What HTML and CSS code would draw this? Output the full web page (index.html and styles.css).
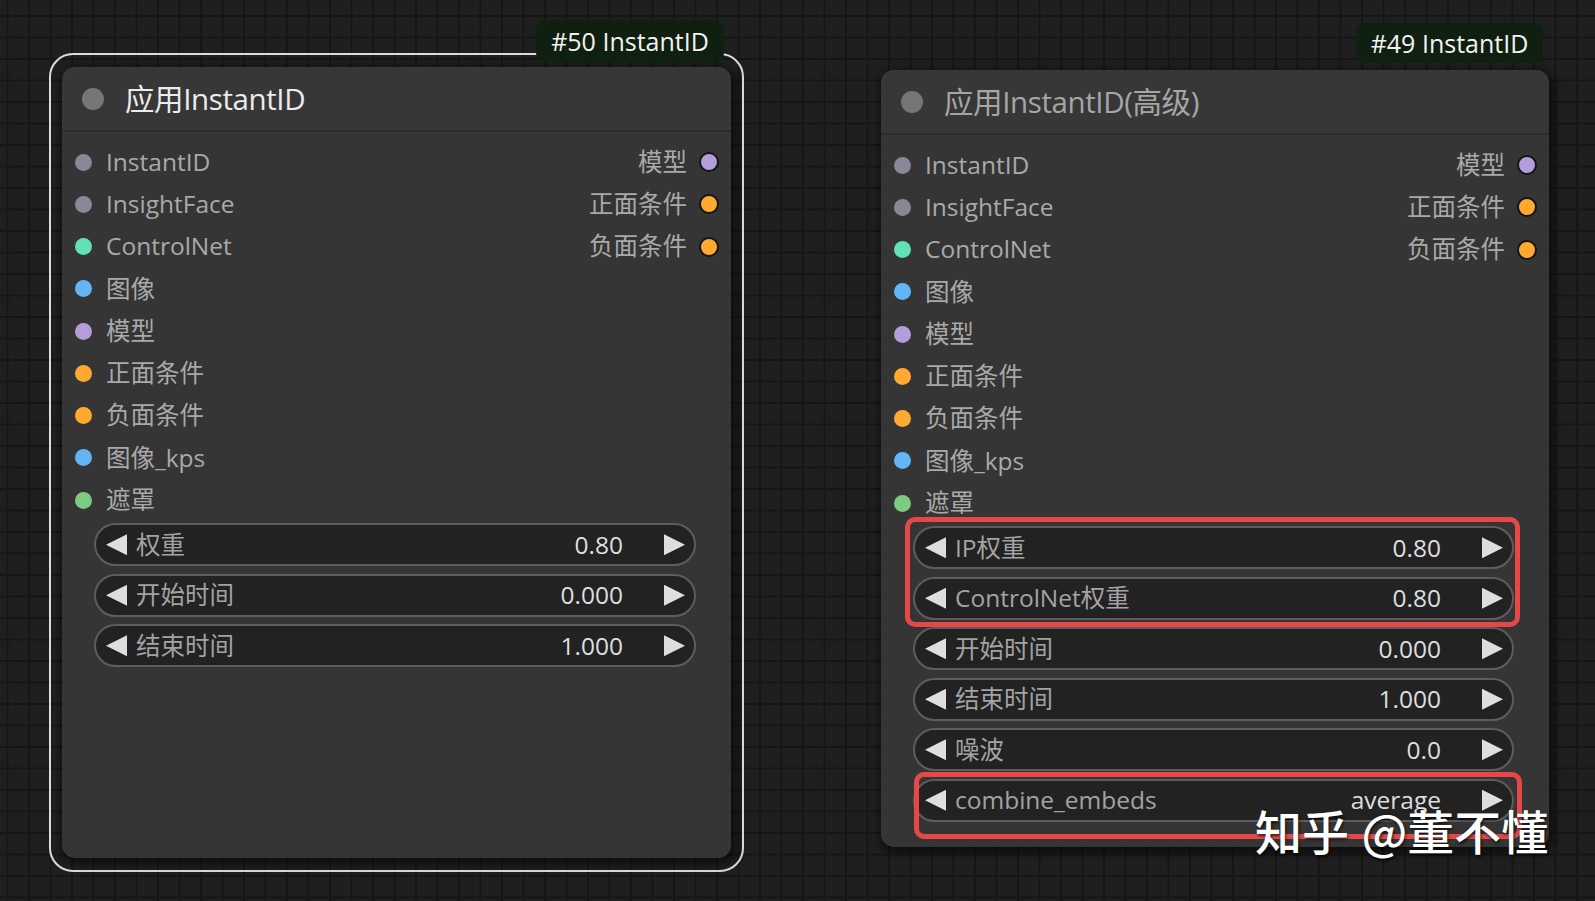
FILE: index.html
```html
<!DOCTYPE html>
<html lang="zh-CN">
<head>
<meta charset="utf-8">
<title>InstantID nodes</title>
<link rel="stylesheet" href="styles.css">
</head>
<body>
<div class="canvas">

  <div class="selection-outline"></div>
  <div class="badge badge-50">#50 InstantID</div>

  <section class="node node-basic">
    <header class="node-title">
      <span class="title-dot"></span>
      <span class="title-text">应用InstantID</span>
    </header>
    <div class="slots">
      <div class="row"><div class="slot-in"><span class="dot c-gray"></span><span>InstantID</span></div><div class="slot-out"><span>模型</span><span class="dot out c-purple"></span></div></div>
      <div class="row"><div class="slot-in"><span class="dot c-gray"></span><span>InsightFace</span></div><div class="slot-out"><span>正面条件</span><span class="dot out c-orange"></span></div></div>
      <div class="row"><div class="slot-in"><span class="dot c-mint"></span><span>ControlNet</span></div><div class="slot-out"><span>负面条件</span><span class="dot out c-orange"></span></div></div>
      <div class="row"><div class="slot-in"><span class="dot c-blue"></span><span>图像</span></div></div>
      <div class="row"><div class="slot-in"><span class="dot c-purple"></span><span>模型</span></div></div>
      <div class="row"><div class="slot-in"><span class="dot c-orange"></span><span>正面条件</span></div></div>
      <div class="row"><div class="slot-in"><span class="dot c-orange"></span><span>负面条件</span></div></div>
      <div class="row"><div class="slot-in"><span class="dot c-blue"></span><span>图像_kps</span></div></div>
      <div class="row"><div class="slot-in"><span class="dot c-green"></span><span>遮罩</span></div></div>
    </div>
    <div class="widgets">
      <div class="widget"><span class="arrow arrow-left"></span><span class="w-label">权重</span><span class="w-value">0.80</span><span class="arrow arrow-right"></span></div>
      <div class="widget"><span class="arrow arrow-left"></span><span class="w-label">开始时间</span><span class="w-value">0.000</span><span class="arrow arrow-right"></span></div>
      <div class="widget"><span class="arrow arrow-left"></span><span class="w-label">结束时间</span><span class="w-value">1.000</span><span class="arrow arrow-right"></span></div>
    </div>
  </section>

  <div class="badge badge-49">#49 InstantID</div>

  <section class="node node-advanced">
    <header class="node-title">
      <span class="title-dot"></span>
      <span class="title-text dim">应用InstantID(高级)</span>
    </header>
    <div class="slots">
      <div class="row"><div class="slot-in"><span class="dot c-gray"></span><span>InstantID</span></div><div class="slot-out"><span>模型</span><span class="dot out c-purple"></span></div></div>
      <div class="row"><div class="slot-in"><span class="dot c-gray"></span><span>InsightFace</span></div><div class="slot-out"><span>正面条件</span><span class="dot out c-orange"></span></div></div>
      <div class="row"><div class="slot-in"><span class="dot c-mint"></span><span>ControlNet</span></div><div class="slot-out"><span>负面条件</span><span class="dot out c-orange"></span></div></div>
      <div class="row"><div class="slot-in"><span class="dot c-blue"></span><span>图像</span></div></div>
      <div class="row"><div class="slot-in"><span class="dot c-purple"></span><span>模型</span></div></div>
      <div class="row"><div class="slot-in"><span class="dot c-orange"></span><span>正面条件</span></div></div>
      <div class="row"><div class="slot-in"><span class="dot c-orange"></span><span>负面条件</span></div></div>
      <div class="row"><div class="slot-in"><span class="dot c-blue"></span><span>图像_kps</span></div></div>
      <div class="row"><div class="slot-in"><span class="dot c-green"></span><span>遮罩</span></div></div>
    </div>
    <div class="widgets">
      <div class="widget"><span class="arrow arrow-left"></span><span class="w-label">IP权重</span><span class="w-value">0.80</span><span class="arrow arrow-right"></span></div>
      <div class="widget"><span class="arrow arrow-left"></span><span class="w-label">ControlNet权重</span><span class="w-value">0.80</span><span class="arrow arrow-right"></span></div>
      <div class="widget"><span class="arrow arrow-left"></span><span class="w-label">开始时间</span><span class="w-value">0.000</span><span class="arrow arrow-right"></span></div>
      <div class="widget"><span class="arrow arrow-left"></span><span class="w-label">结束时间</span><span class="w-value">1.000</span><span class="arrow arrow-right"></span></div>
      <div class="widget"><span class="arrow arrow-left"></span><span class="w-label">噪波</span><span class="w-value">0.0</span><span class="arrow arrow-right"></span></div>
      <div class="widget"><span class="arrow arrow-left"></span><span class="w-label">combine_embeds</span><span class="w-value">average</span><span class="arrow arrow-right"></span></div>
    </div>
  </section>

  <div class="highlight highlight-weights"></div>
  <div class="highlight highlight-combine"></div>

  <div class="watermark">知乎 @董不懂</div>
</div>
</body>
</html>
```

FILE: styles.css
```css
html, body {
  margin: 0;
  padding: 0;
}

body {
  width: 1595px;
  height: 901px;
  overflow: hidden;
  background-color: #1f1f1f;
  background-image:
    linear-gradient(#161616 2px, transparent 2px),
    linear-gradient(90deg, #161616 2px, transparent 2px);
  background-size: 21.5px 21.5px;
  background-position: 6.5px 15px;
  font-family: "Open Sans", "Noto Sans CJK SC", sans-serif;
  color: #a9a9a9;
}

.canvas {
  position: relative;
  width: 1595px;
  height: 901px;
}

/* ---------- nodes ---------- */
.node {
  position: absolute;
  display: flex;
  flex-direction: column;
  background: #353535;
  border-radius: 13px;
  box-shadow: 2px 3px 9px 3px rgba(0, 0, 0, 0.55);
  box-sizing: border-box;
}

.node-basic {
  left: 62px;
  top: 67px;
  width: 669px;
  height: 791px;
}

.node-advanced {
  left: 881px;
  top: 70px;
  width: 668px;
  height: 777px;
}

.node-title {
  height: 63px;
  display: flex;
  align-items: center;
  gap: 21px;
  padding-left: 20px;
  background: #373737;
  border-radius: 13px 13px 0 0;
  border-bottom: 2px solid #2c2c2c;
}

.title-dot {
  width: 22px;
  height: 22px;
  border-radius: 50%;
  background: #767676;
  flex: none;
}

.title-text {
  font-size: 29.5px;
  line-height: 1;
  color: #ececec;
  letter-spacing: -0.4px;
}

.title-text.dim {
  color: #a6a6a6;
}

/* ---------- slots ---------- */
.slots {
  padding-top: 9px;
  display: flex;
  flex-direction: column;
}

.row {
  height: 42.25px;
  display: flex;
  align-items: center;
  justify-content: space-between;
  font-size: 24.5px;
  line-height: 1;
}

.slot-in {
  display: flex;
  align-items: center;
  gap: 14px;
  padding-left: 13px;
}

.slot-out {
  display: flex;
  align-items: center;
  gap: 12px;
  padding-right: 12px;
}

.dot {
  width: 17px;
  height: 17px;
  border-radius: 50%;
  flex: none;
}

.dot.out {
  width: 16px;
  height: 16px;
  border: 2px solid #141414;
}

.c-gray { background: #8a8797; }
.c-mint { background: #62e2b4; }
.c-blue { background: #64b5f6; }
.c-purple { background: #b39ddb; }
.c-orange { background: #ffa931; }
.c-green { background: #7ccb80; }

/* ---------- widgets ---------- */
.widgets {
  display: flex;
  flex-direction: column;
  gap: 7.5px;
  padding: 0 35px 0 32px;
  margin-top: 2px;
}

.widget {
  height: 43px;
  box-sizing: border-box;
  border: 2px solid #5d5d5d;
  border-radius: 22px;
  background: #222222;
  display: flex;
  align-items: center;
  padding: 0 9px 0 10px;
  font-size: 24.5px;
  line-height: 1;
}

.arrow {
  width: 21px;
  height: 21px;
  background: #dedede;
  flex: none;
}

.arrow-left {
  clip-path: polygon(100% 0, 0 50%, 100% 100%);
}

.arrow-right {
  clip-path: polygon(0 0, 100% 50%, 0 100%);
  margin-left: 41px;
}

.w-label {
  flex: 1;
  margin-left: 9px;
  color: #a3a3a3;
  white-space: nowrap;
}

.w-value {
  color: #dedede;
  white-space: nowrap;
}

/* ---------- overlays ---------- */
.selection-outline {
  position: absolute;
  left: 49px;
  top: 53px;
  width: 695px;
  height: 819px;
  box-sizing: border-box;
  border: 2px solid #dcdcdc;
  border-radius: 24px;
}

.badge {
  position: absolute;
  z-index: 2;
  box-sizing: border-box;
  display: flex;
  align-items: center;
  justify-content: center;
  background: #0f1f10;
  border-radius: 9px;
  color: #f2f2f2;
  font-family: "Open Sans", sans-serif;
  font-size: 25px;
  line-height: 1;
}

.badge-50 {
  left: 536px;
  top: 20px;
  width: 188px;
  height: 42px;
}

.badge-49 {
  left: 1356px;
  top: 23px;
  width: 187px;
  height: 40px;
}

.highlight {
  position: absolute;
  z-index: 3;
  box-sizing: border-box;
  border: 5px solid #e64848;
  border-radius: 10px;
}

.highlight-weights {
  left: 905px;
  top: 517px;
  width: 615px;
  height: 110px;
}

.highlight-combine {
  left: 914px;
  top: 772px;
  width: 608px;
  height: 67px;
}

.watermark {
  position: absolute;
  z-index: 4;
  left: 1255px;
  top: 806px;
  font-family: "Noto Sans CJK SC", sans-serif;
  font-size: 47px;
  font-weight: 500;
  line-height: 48px;
  color: #ffffff;
  word-spacing: 2px;
  white-space: nowrap;
  text-shadow: 1px 2px 3px rgba(0, 0, 0, 0.7);
}
```
